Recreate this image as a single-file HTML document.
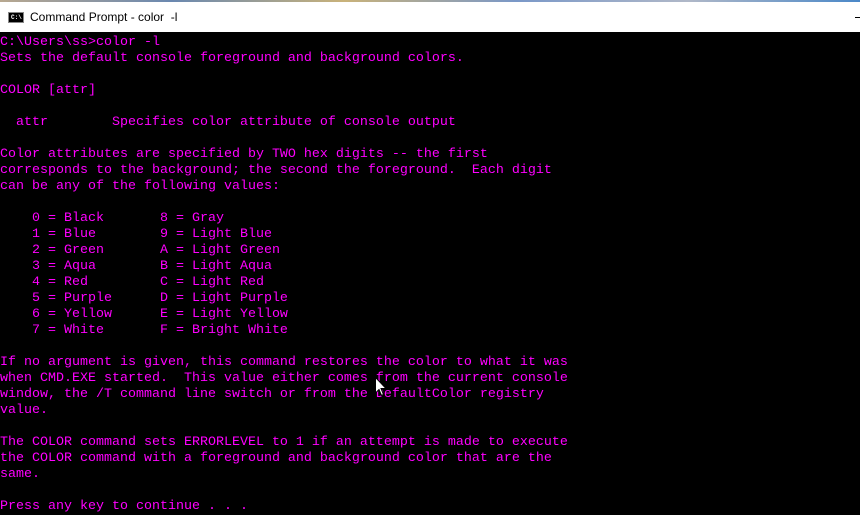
<!DOCTYPE html>
<html><head><meta charset="utf-8"><style>
html,body{margin:0;padding:0;width:860px;height:514px;overflow:hidden;background:#000}
#tb{position:absolute;left:0;top:0;width:860px;height:32px;background:#fff;border-top:2px solid #c8c8c8;box-sizing:border-box}
#tb .strip{position:absolute;left:0;top:-2px;width:860px;height:2px;background:linear-gradient(90deg,#b8a890,#6a88b0 20%,#c9b27a 40%,#7a98c8 60%,#b0b8c8 80%,#4a88c8)}
#icon{position:absolute;left:8px;top:10px;width:16px;height:11px;background:#000;border:1px solid #888;box-sizing:border-box}
#icon span{position:absolute;left:2px;top:1px;color:#fff;font:bold 6px "Liberation Mono",monospace}
#title{position:absolute;left:30px;top:8px;font:12px "Liberation Sans",sans-serif;color:#000}
#min{position:absolute;left:855px;top:15px;width:5px;height:1px;background:#000}
pre{position:absolute;left:0;top:35px;margin:0;font:13.33px/16px "Liberation Mono",monospace;color:#f0f;letter-spacing:0}
</style></head><body>
<div id="tb"><div class="strip"></div><div id="icon"><span>C:\</span></div><div id="title">Command Prompt - color &nbsp;-l</div><div id="min"></div></div>
<pre>C:\Users\ss&gt;color -l
Sets the default console foreground and background colors.

COLOR [attr]

  attr        Specifies color attribute of console output

Color attributes are specified by TWO hex digits -- the first
corresponds to the background; the second the foreground.  Each digit
can be any of the following values:

    0 = Black       8 = Gray
    1 = Blue        9 = Light Blue
    2 = Green       A = Light Green
    3 = Aqua        B = Light Aqua
    4 = Red         C = Light Red
    5 = Purple      D = Light Purple
    6 = Yellow      E = Light Yellow
    7 = White       F = Bright White

If no argument is given, this command restores the color to what it was
when CMD.EXE started.  This value either comes from the current console
window, the /T command line switch or from the DefaultColor registry
value.

The COLOR command sets ERRORLEVEL to 1 if an attempt is made to execute
the COLOR command with a foreground and background color that are the
same.

Press any key to continue . . .</pre>
<svg style="position:absolute;left:375px;top:377px" width="12" height="20" viewBox="0 0 12 20"><path d="M0.5 0.5 L0.5 16 L4 12.5 L6.5 18.5 L8.5 17.5 L6 11.5 L11 11.5 Z" fill="#fff" stroke="#000" stroke-width="1"/></svg>
</body></html>
